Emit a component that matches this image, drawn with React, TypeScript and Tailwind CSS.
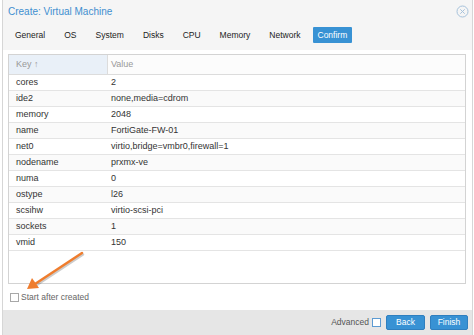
const tabs = ["General", "OS", "System", "Disks", "CPU", "Memory", "Network"];

const rows: [string, string][] = [
  ["cores", "2"],
  ["ide2", "none,media=cdrom"],
  ["memory", "2048"],
  ["name", "FortiGate-FW-01"],
  ["net0", "virtio,bridge=vmbr0,firewall=1"],
  ["nodename", "prxmx-ve"],
  ["numa", "0"],
  ["ostype", "l26"],
  ["scsihw", "virtio-scsi-pci"],
  ["sockets", "1"],
  ["vmid", "150"],
];

const App = () => {
  return (
    <div className="relative w-[474px] h-[335px] overflow-hidden bg-white pl-[2px] pr-[1px] font-['Liberation_Sans',Arial,sans-serif] text-[#333]">
      <div className="flex h-full flex-col border-x border-[#d6d6d6]">
        {/* header */}
        <div className="flex h-[50px] flex-col bg-[#f5f5f5]">
          <div className="flex h-[22px] items-center justify-between pl-[5px] pr-[3px]">
            <span className="text-[10px] text-[#3f8fd0]">Create: Virtual Machine</span>
            <svg width="13" height="13" viewBox="0 0 13 13" fill="none" stroke="#a6c2db" strokeWidth="1">
              <circle cx="6.5" cy="6.5" r="5.5" />
              <path d="M4.3 4.3l4.4 4.4M8.7 4.3l-4.4 4.4" />
            </svg>
          </div>
          <div className="flex h-[26px] items-center gap-[19px] pl-[12px] text-[8.5px] text-[#222]">
            {tabs.map((t) => (
              <span key={t}>{t}</span>
            ))}
            <span className="-ml-[7px] flex h-[16px] items-center rounded-[1px] bg-[#3892d4] px-[5px] text-white">
              Confirm
            </span>
          </div>
        </div>

        {/* body */}
        <div className="flex flex-1 flex-col">
          <div className="ml-[5px] mr-[6px] mt-[4px] flex h-[230px] flex-col border border-[#d3d3d3] text-[9px]">
            <div className="flex h-[20px] border-b border-[#dcdcdc] text-[#999]">
              <div className="flex w-[99px] items-center border-r border-[#dcdcdc] bg-[#e9f0f8] pl-[7px]">Key ↑</div>
              <div className="flex flex-1 items-center bg-[#fcfcfc] pl-[3px]">Value</div>
            </div>
            {rows.map(([k, v], i) => (
              <div
                key={k}
                className={`flex h-[16px] items-center border-b border-[#e4e4e4] ${i % 2 === 1 ? "bg-[#fafafa]" : "bg-white"}`}
              >
                <div className="w-[99px] pl-[7px]">{k}</div>
                <div className="flex-1 pl-[3px]">{v}</div>
              </div>
            ))}
          </div>
          <div className="flex h-[26px] items-center gap-[2px] pl-[7px] text-[8.5px] text-[#666]">
            <span className="h-[9px] w-[9px] border border-[#a8a8a8] bg-white" />
            <span>Start after created</span>
          </div>
        </div>

        {/* footer */}
        <div className="flex h-[25px] items-center justify-end bg-[#e6e6e6] pr-[4px] text-[8.5px]">
          <span className="text-[#555]">Advanced</span>
          <span className="ml-[3px] h-[9px] w-[9px] border border-[#5d9bd2] bg-white" />
          <button className="ml-[5px] h-[15px] w-[39px] rounded-[2px] border border-[#2f7fbf] bg-[#3892d4] text-white">
            Back
          </button>
          <button className="ml-[5px] h-[15px] w-[38px] rounded-[2px] border border-[#2f7fbf] bg-[#3892d4] text-white">
            Finish
          </button>
        </div>
      </div>

      {/* annotation arrow */}
      <svg className="absolute left-0 top-0" width="474" height="335" viewBox="0 0 474 335" fill="none">
        <g opacity="0.2" transform="translate(1 1.5)">
          <path d="M82 253 L35 284" stroke="#000" strokeWidth="2.5" strokeLinecap="round" />
        </g>
        <path d="M82 253 L35 284" stroke="#ef7d2e" strokeWidth="2.5" strokeLinecap="round" />
        <path d="M27 289 L32 278 L39 288 Z" fill="#ef7d2e" />
      </svg>
    </div>
  );
};

export default App;
